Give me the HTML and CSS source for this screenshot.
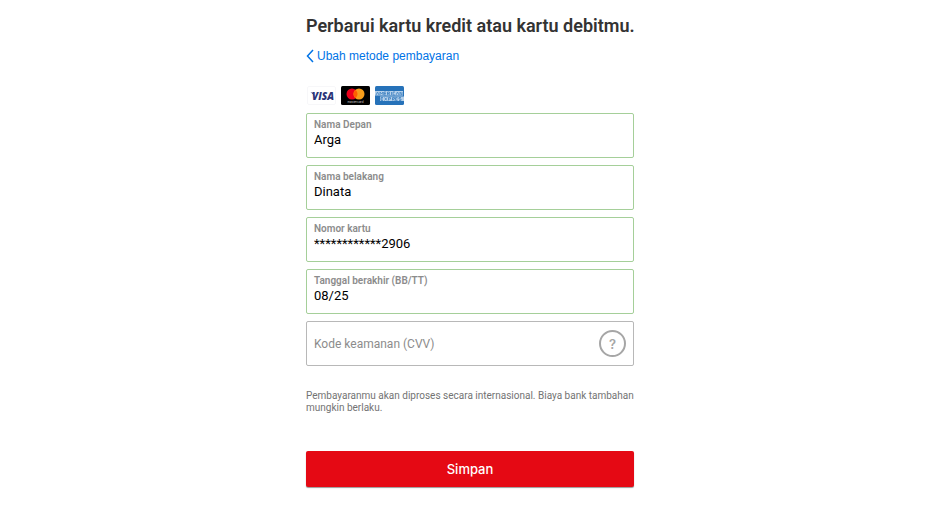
FILE: index.html
```html
<!DOCTYPE html>
<html lang="id">
<head>
<meta charset="utf-8">
<meta name="viewport" content="width=device-width, initial-scale=1">
<title>Perbarui kartu</title>
<link rel="stylesheet" href="styles.css">
</head>
<body>
<main class="payment">
  <h1 class="title">Perbarui kartu kredit atau kartu debitmu.</h1>
  <a class="back" href="#">
    <svg class="back-icon" viewBox="0 0 8 14" aria-hidden="true"><path d="M7 1 1.500 7 7 13"/></svg>
    Ubah metode pembayaran
  </a>
  <div class="cards">
    <svg class="card" viewBox="0 0 29 19" role="img" aria-label="Visa">
      <rect x=".5" y=".5" width="28" height="18" rx="1.5" fill="#fff" stroke="#f7f7f9"/>
      <text class="visa" x="5" y="13.500">VISA</text>
      <path d="M3.500 6.500H6l2 5C7 9 5.500 7.500 3.500 6.500Z" fill="#2a3478"/>
    </svg>
    <svg class="card" viewBox="0 0 29 19" role="img" aria-label="Mastercard">
      <rect width="29" height="19" rx="1.5" fill="#000"/>
      <circle cx="11" cy="8" r="5.500" fill="#eb001b"/>
      <circle cx="18" cy="8" r="5.500" fill="#f79e1b"/>
      <path d="M14.500 3.750a5.500 5.500 0 0 1 0 8.500 5.500 5.500 0 0 1 0-8.500Z" fill="#ff5f00"/>
      <text class="mastercard" x="14.500" y="16.500">mastercard</text>
    </svg>
    <svg class="card" viewBox="0 0 29 19" role="img" aria-label="American Express">
      <rect width="29" height="19" rx="1.5" fill="#2672b9"/>
      <path d="M0 5h28v4.500H0ZM5 10.500h24V15H5Z" fill="#b5d0ea"/>
      <g fill="none" stroke="#3d82c2" stroke-width=".8">
        <path d="m1 9 1.500-3L4 9m1 0V6l1.500 2L8 6v3m3-3H9v3h2M9 7.500h2M12.500 9V6h2v1.500h-2L15 9m1.500-3v3m3.500-3h-2v3h2m1 0 1.500-3L24 9m1 0V6l2 3V6"/>
        <path d="M8 11.500H6v3h2M6 13h2m1.500-1.500 2.500 3m0-3-2.500 3m4 0v-3h2V13h-2m4 1.500v-3h2V13h-2l2 1.500m3-3h-2v3h2m-2-1.500h2m3.500-1.500h-2V13h2v1.500h-2"/>
      </g>
    </svg>
  </div>
  <form class="form">
    <div class="field valid">
      <label class="label" for="first">Nama Depan</label>
      <input class="input" id="first" type="text" value="Arga">
    </div>
    <div class="field valid">
      <label class="label" for="last">Nama belakang</label>
      <input class="input" id="last" type="text" value="Dinata">
    </div>
    <div class="field valid">
      <label class="label" for="number">Nomor kartu</label>
      <input class="input" id="number" type="text" value="************2906">
    </div>
    <div class="field valid">
      <label class="label" for="expiry">Tanggal berakhir (BB/TT)</label>
      <input class="input" id="expiry" type="text" value="08/25">
    </div>
    <div class="field code">
      <input class="input" id="cvv" type="text" placeholder="Kode keamanan (CVV)" aria-label="Kode keamanan (CVV)">
      <button class="help" type="button">?</button>
    </div>
    <p class="note">Pembayaranmu akan diproses secara internasional. Biaya bank tambahan mungkin berlaku.</p>
    <button class="save" type="submit">Simpan</button>
  </form>
</main>
</body>
</html>
```
FILE: styles.css
```css
* { box-sizing: border-box; }
body {
  margin: 0;
  background: #fff;
  color: #333;
  font-family: Roboto, "Liberation Sans", sans-serif;
}
.payment {
  max-width: 328px;
  margin: 0 auto;
  padding: 14px 0 32px;
}
.title {
  margin: 0;
  font-size: 18px;
  font-weight: 600;
  line-height: 24px;
  white-space: nowrap;
}
.back {
  display: flex;
  align-items: center;
  gap: 3px;
  margin-top: 10px;
  color: #0073e6;
  font-family: "Liberation Sans", sans-serif;
  font-size: 12px;
  line-height: 16px;
  text-decoration: none;
}
.back-icon {
  width: 8px;
  height: 14px;
  fill: none;
  stroke: #0073e6;
  stroke-width: 1.5;
}
.cards {
  display: flex;
  gap: 5px;
  margin: 22px 0 8px;
  padding-left: 1px;
}
.card { width: 29px; height: 19px; }
.visa {
  fill: #2a3478;
  font: italic 800 10px "Open Sans", sans-serif;
}
.mastercard {
  fill: #ccc;
  font: 3px Inter, sans-serif;
  text-anchor: middle;
}
.form {
  display: flex;
  flex-direction: column;
  gap: 7px;
}
.field {
  display: flex;
  flex-direction: column;
  min-height: 45px;
  padding: 4px 7px;
  border: 1px solid #b8b8b8;
  border-radius: 2px;
}
.valid { border-color: #a5cf99; }
.label {
  color: #8c8c8c;
  font-size: 10px;
  font-weight: 600;
  line-height: 13px;
}
.input {
  width: 100%;
  padding: 0;
  border: 0;
  outline: 0;
  background: none;
  color: #000;
  font: 13px/18px Roboto, "Liberation Sans", sans-serif;
}
.input::placeholder {
  color: #8c8c8c;
  font-size: 12px;
  opacity: 1;
}
.code {
  flex-direction: row;
  align-items: center;
}
.help {
  flex: none;
  width: 27px;
  height: 27px;
  padding: 0;
  border: 2px solid #a6a6a6;
  border-radius: 50%;
  background: none;
  color: #a6a6a6;
  font: 600 13px/20px Inter, sans-serif;
}
.note {
  margin: 17px 0 30px;
  color: #737373;
  font-size: 10px;
  line-height: 12px;
}
.save {
  height: 36px;
  border: 0;
  border-radius: 2px;
  background: #e50914;
  box-shadow: 0 1px 1px #0006;
  color: #fff;
  font: 500 13px/20px Inter, sans-serif;
}
```
